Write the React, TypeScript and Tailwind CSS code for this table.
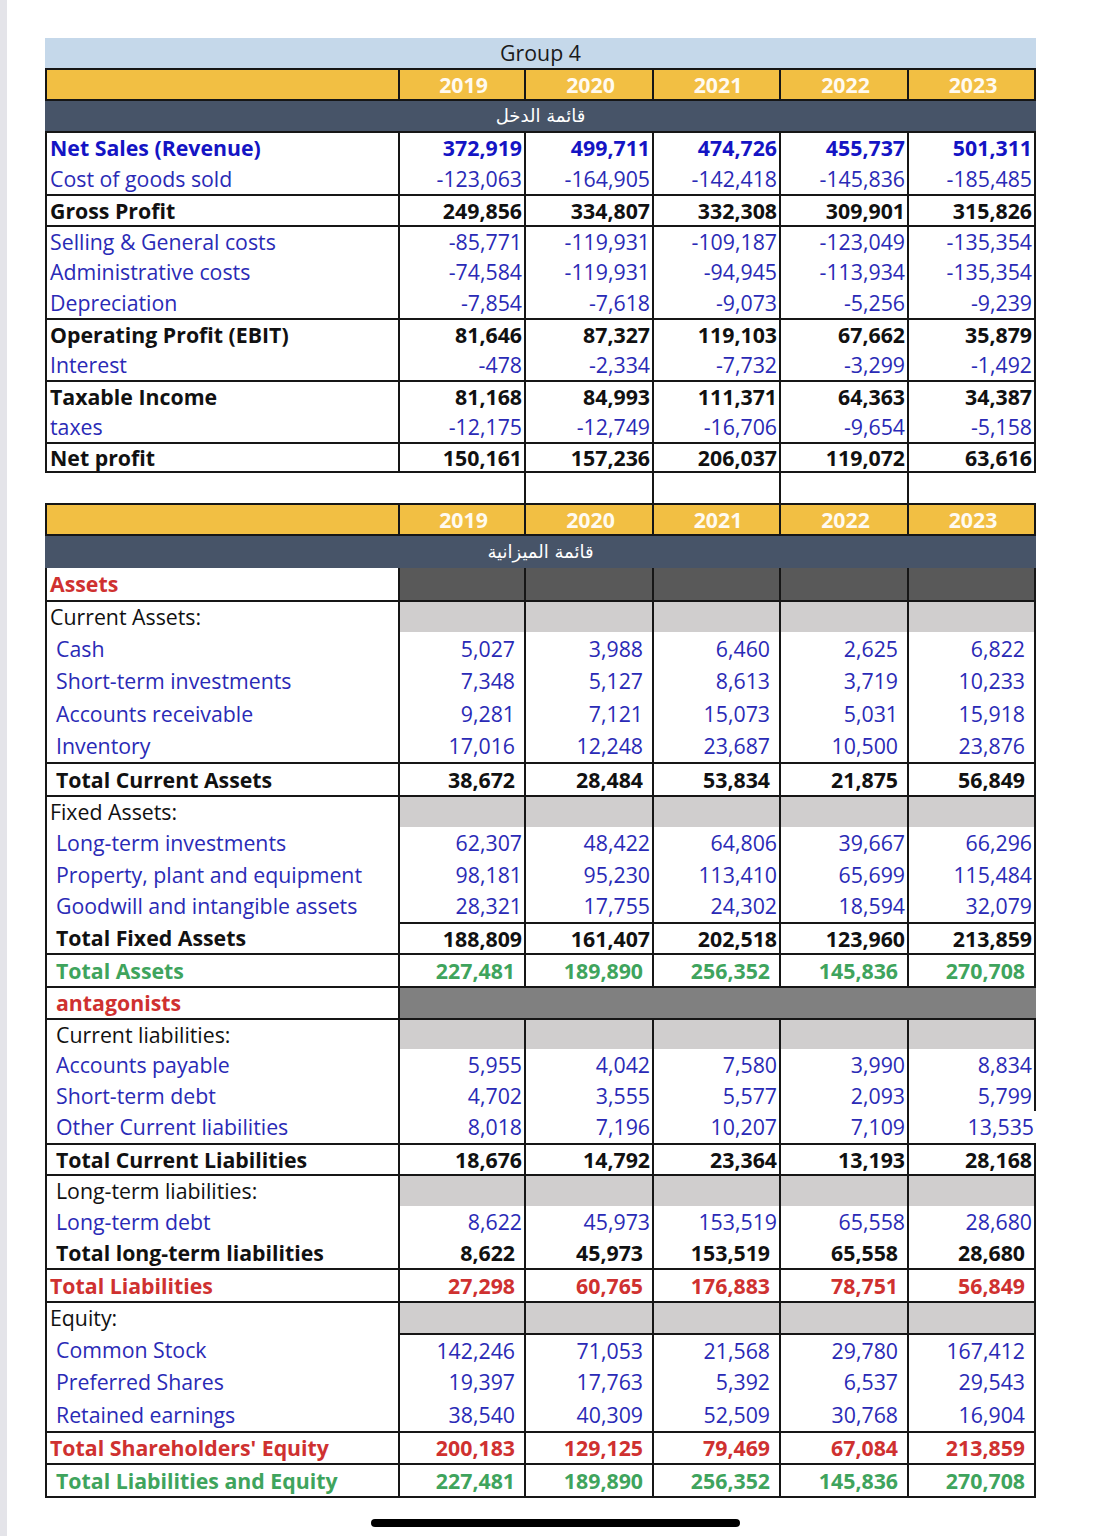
const years = ['2019', '2020', '2021', '2022', '2023']

type Fill = 'none' | 'dark' | 'mid' | 'light'

type RowSpec = {
  label: string
  values?: string[]
  h: string
  tone?: 'blue' | 'black' | 'red' | 'green'
  bold?: boolean
  indent?: boolean
  top?: boolean
  topData?: boolean
  bottom?: boolean
  tight?: boolean
  fill?: Fill
  openRight?: boolean
}

const cols = 'grid grid-cols-[355px_126px_128px_127px_128px_127px]'
const line = 'border-[#161616]'

const income: RowSpec[] = [
  { label: 'Net Sales (Revenue)', values: ['372,919', '499,711', '474,726', '455,737', '501,311'], h: 'h-[32px]', tone: 'blue', bold: true, top: true, tight: true },
  { label: 'Cost of goods sold', values: ['-123,063', '-164,905', '-142,418', '-145,836', '-185,485'], h: 'h-[31px]', tone: 'blue', tight: true },
  { label: 'Gross Profit', values: ['249,856', '334,807', '332,308', '309,901', '315,826'], h: 'h-[31px]', bold: true, top: true, tight: true },
  { label: 'Selling & General costs', values: ['-85,771', '-119,931', '-109,187', '-123,049', '-135,354'], h: 'h-[31px]', tone: 'blue', top: true, tight: true },
  { label: 'Administrative costs', values: ['-74,584', '-119,931', '-94,945', '-113,934', '-135,354'], h: 'h-[31px]', tone: 'blue', tight: true },
  { label: 'Depreciation', values: ['-7,854', '-7,618', '-9,073', '-5,256', '-9,239'], h: 'h-[31px]', tone: 'blue', tight: true },
  { label: 'Operating Profit (EBIT)', values: ['81,646', '87,327', '119,103', '67,662', '35,879'], h: 'h-[31px]', bold: true, top: true, tight: true },
  { label: 'Interest', values: ['-478', '-2,334', '-7,732', '-3,299', '-1,492'], h: 'h-[31px]', tone: 'blue', tight: true },
  { label: 'Taxable Income', values: ['81,168', '84,993', '111,371', '64,363', '34,387'], h: 'h-[31px]', bold: true, top: true, tight: true },
  { label: 'taxes', values: ['-12,175', '-12,749', '-16,706', '-9,654', '-5,158'], h: 'h-[31px]', tone: 'blue', tight: true },
  { label: 'Net profit', values: ['150,161', '157,236', '206,037', '119,072', '63,616'], h: 'h-[31px]', bold: true, top: true, bottom: true, tight: true },
]

const balance: RowSpec[] = [
  { label: 'Assets', h: 'h-[32px]', tone: 'red', bold: true, fill: 'dark' },
  { label: 'Current Assets:', h: 'h-[32px]', top: true, fill: 'light' },
  { label: 'Cash', values: ['5,027', '3,988', '6,460', '2,625', '6,822'], h: 'h-[33px]', tone: 'blue', indent: true },
  { label: 'Short-term investments', values: ['7,348', '5,127', '8,613', '3,719', '10,233'], h: 'h-[32px]', tone: 'blue', indent: true },
  { label: 'Accounts receivable', values: ['9,281', '7,121', '15,073', '5,031', '15,918'], h: 'h-[33px]', tone: 'blue', indent: true },
  { label: 'Inventory', values: ['17,016', '12,248', '23,687', '10,500', '23,876'], h: 'h-[32px]', tone: 'blue', indent: true },
  { label: 'Total Current Assets', values: ['38,672', '28,484', '53,834', '21,875', '56,849'], h: 'h-[33px]', bold: true, indent: true, top: true },
  { label: 'Fixed Assets:', h: 'h-[32px]', top: true, fill: 'light' },
  { label: 'Long-term investments', values: ['62,307', '48,422', '64,806', '39,667', '66,296'], h: 'h-[32px]', tone: 'blue', indent: true, tight: true },
  { label: 'Property, plant and equipment', values: ['98,181', '95,230', '113,410', '65,699', '115,484'], h: 'h-[31px]', tone: 'blue', indent: true, tight: true },
  { label: 'Goodwill and intangible assets', values: ['28,321', '17,755', '24,302', '18,594', '32,079'], h: 'h-[32px]', tone: 'blue', indent: true, tight: true },
  { label: 'Total Fixed Assets', values: ['188,809', '161,407', '202,518', '123,960', '213,859'], h: 'h-[31px]', bold: true, indent: true, topData: true, tight: true },
  { label: 'Total Assets', values: ['227,481', '189,890', '256,352', '145,836', '270,708'], h: 'h-[33px]', tone: 'green', bold: true, indent: true, top: true },
  { label: 'antagonists', h: 'h-[32px]', tone: 'red', bold: true, indent: true, top: true, fill: 'mid' },
  { label: 'Current liabilities:', h: 'h-[31px]', indent: true, top: true, fill: 'light' },
  { label: 'Accounts payable', values: ['5,955', '4,042', '7,580', '3,990', '8,834'], h: 'h-[31px]', tone: 'blue', indent: true, tight: true },
  { label: 'Short-term debt', values: ['4,702', '3,555', '5,577', '2,093', '5,799'], h: 'h-[31px]', tone: 'blue', indent: true, tight: true },
  { label: 'Other Current liabilities', values: ['8,018', '7,196', '10,207', '7,109', '13,535'], h: 'h-[32px]', tone: 'blue', indent: true, tight: true, openRight: true },
  { label: 'Total Current Liabilities', values: ['18,676', '14,792', '23,364', '13,193', '28,168'], h: 'h-[31px]', bold: true, indent: true, top: true, tight: true },
  { label: 'Long-term liabilities:', h: 'h-[32px]', indent: true, top: true, fill: 'light' },
  { label: 'Long-term debt', values: ['8,622', '45,973', '153,519', '65,558', '28,680'], h: 'h-[31px]', tone: 'blue', indent: true, tight: true },
  { label: 'Total long-term liabilities', values: ['8,622', '45,973', '153,519', '65,558', '28,680'], h: 'h-[31px]', bold: true, indent: true },
  { label: 'Total Liabilities', values: ['27,298', '60,765', '176,883', '78,751', '56,849'], h: 'h-[33px]', tone: 'red', bold: true, top: true },
  { label: 'Equity:', h: 'h-[32px]', top: true, fill: 'light' },
  { label: 'Common Stock', values: ['142,246', '71,053', '21,568', '29,780', '167,412'], h: 'h-[33px]', tone: 'blue', indent: true, topData: true },
  { label: 'Preferred Shares', values: ['19,397', '17,763', '5,392', '6,537', '29,543'], h: 'h-[32px]', tone: 'blue', indent: true },
  { label: 'Retained earnings', values: ['38,540', '40,309', '52,509', '30,768', '16,904'], h: 'h-[33px]', tone: 'blue', indent: true },
  { label: "Total Shareholders' Equity", values: ['200,183', '129,125', '79,469', '67,084', '213,859'], h: 'h-[32px]', tone: 'red', bold: true, top: true },
  { label: 'Total Liabilities and Equity', values: ['227,481', '189,890', '256,352', '145,836', '270,708'], h: 'h-[35px]', tone: 'green', bold: true, indent: true, top: true, bottom: true },
]

function toneClass(r: RowSpec) {
  if (r.tone === 'blue') return r.bold ? 'text-[#1414c4]' : 'text-[#2a2ab6]'
  if (r.tone === 'red') return 'text-[#cf3130]'
  if (r.tone === 'green') return 'text-[#3fa45d]'
  return 'text-[#111111]'
}

function fillClass(f?: Fill) {
  if (f === 'dark') return 'bg-[#595959]'
  if (f === 'mid') return 'bg-[#808080]'
  if (f === 'light') return 'bg-[#d0cece]'
  return 'bg-white'
}

function Row({ r }: { r: RowSpec }) {
  const text = `${toneClass(r)} ${r.bold ? 'font-bold' : 'font-normal'}`
  return (
    <div className={`${cols} ${r.h}`}>
      <div
        className={`flex items-center whitespace-nowrap border-l-2 border-r-2 ${line} ${r.top ? 'border-t-2' : ''} ${r.bottom ? 'border-b-2' : ''} ${r.indent ? 'pl-[9px]' : 'pl-[3px]'} ${text}`}
      >
        {r.label}
      </div>
      {years.map((y, i) => {
        const last = i === years.length - 1
        const noSide = r.fill === 'mid' || (last && r.openRight)
        return (
          <div
            key={y}
            className={`flex items-center justify-end ${line} ${fillClass(r.fill)} ${noSide ? '' : 'border-r-2'} ${r.top || r.topData ? 'border-t-2' : ''} ${r.bottom ? 'border-b-2' : ''} ${r.tight ? 'pr-[2px]' : 'pr-[9px]'} ${text}`}
          >
            {r.values ? r.values[i] : ''}
          </div>
        )
      })}
    </div>
  )
}

function YearHeader() {
  return (
    <div className={`${cols} h-[33px] bg-[#f2bf43]`}>
      <div className={`border-2 ${line}`} />
      {years.map((y) => (
        <div
          key={y}
          className={`flex items-center justify-center pl-[3px] border-y-2 border-r-2 ${line} font-bold text-[#fffaf0]`}
        >
          {y}
        </div>
      ))}
    </div>
  )
}

function ArabicBar({ title, h }: { title: string; h: string }) {
  return (
    <div
      dir="rtl"
      className={`flex items-center justify-center ${h} bg-[#475468] text-[18px] text-white font-['DejaVu_Sans',sans-serif]`}
    >
      {title}
    </div>
  )
}

export default function App() {
  return (
    <div className="flex min-h-[1536px] bg-white font-['Open_Sans','DejaVu_Sans',sans-serif] text-[21.3px] leading-none">
      <div className="w-[7px] shrink-0 bg-[#e4e4e9]" />
      <div className="ml-[38px] pt-[38px]">
        <div className="w-[991px]">
          {/* Income statement */}
          <div className="flex h-[30px] items-center justify-center bg-[#c5d8ea] text-[#1a1a1a]">Group 4</div>
          <YearHeader />
          <ArabicBar title="قائمة الدخل" h="h-[30px]" />
          {income.map((r) => (
            <Row key={r.label} r={r} />
          ))}

          {/* spacer row between the two tables */}
          <div className={`${cols} h-[30px]`}>
            <div />
            <div className={`border-r-2 ${line}`} />
            <div className={`border-r-2 ${line}`} />
            <div className={`border-r-2 ${line}`} />
            <div className={`border-r-2 ${line}`} />
            <div />
          </div>

          {/* Balance sheet */}
          <YearHeader />
          <ArabicBar title="قائمة الميزانية" h="h-[32px]" />
          {balance.map((r) => (
            <Row key={r.label} r={r} />
          ))}
        </div>
        <div className="ml-[326px] mt-[21px] h-[8px] w-[369px] rounded-full bg-black" />
      </div>
    </div>
  )
}
